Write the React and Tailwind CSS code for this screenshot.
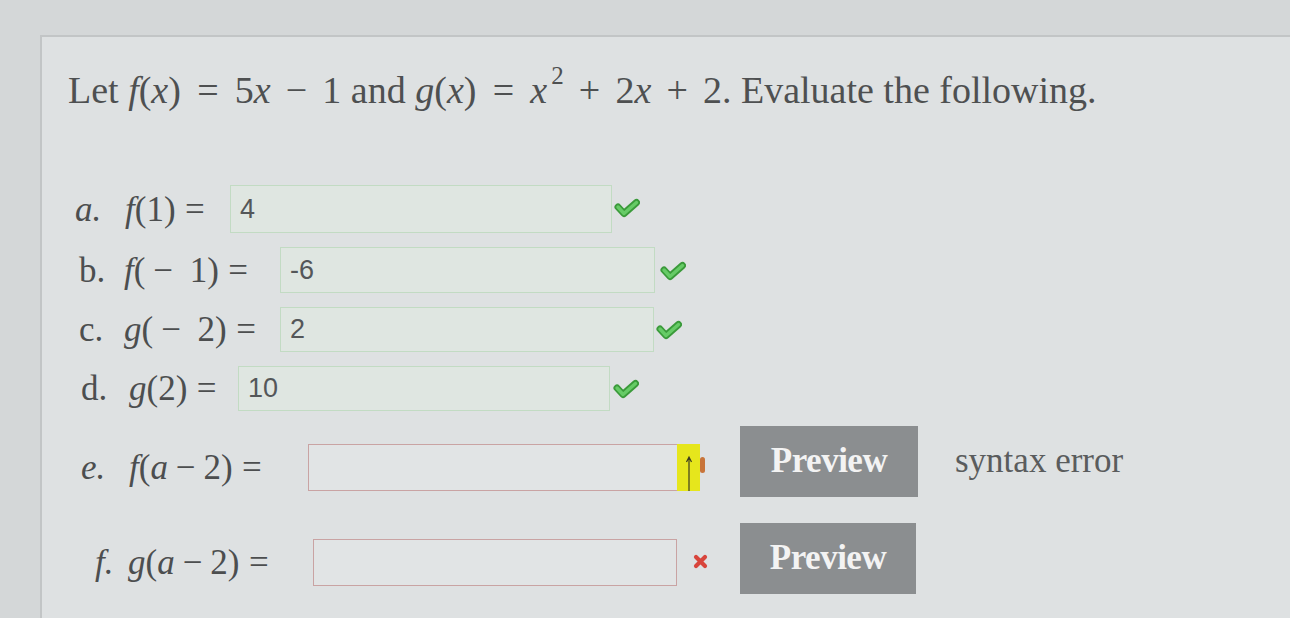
import React from "react";

const serif = { fontFamily: '"Liberation Serif", "Times New Roman", serif' };
const sans = { fontFamily: '"Liberation Sans", Arial, sans-serif' };

const Check = () => (
  <svg width="26" height="21" viewBox="0 0 26 21" className="shrink-0">
    <path d="M4 10 L10 16.5 L22.5 5.5" fill="none" stroke="#3a9a3a" strokeWidth="7" strokeLinecap="round" strokeLinejoin="round" />
    <path d="M4 10 L10 16.5 L22.5 5.5" fill="none" stroke="#66cb66" strokeWidth="3.4" strokeLinecap="round" strokeLinejoin="round" />
  </svg>
);

const Cross = () => (
  <svg width="15" height="15" viewBox="0 0 15 15" className="shrink-0">
    <path d="M3 3 L12 12 M12 3 L3 12" stroke="#d8453c" strokeWidth="4.2" strokeLinecap="round" />
  </svg>
);

// math pieces, spaced roughly the way the TeX renderer spaces them
const V = ({ children }) => <i>{children}</i>;
const Rel = ({ children, wide }) => (
  <span className={`inline-block w-[0.7em] text-center not-italic ${wide ? "mx-[0.36em]" : "mx-[0.2em]"}`}>
    {children}
  </span>
);
const Bin = ({ children, wide }) => (
  <span className={`inline-block w-[0.7em] text-center not-italic ${wide ? "mx-[0.33em]" : "mx-[0.16em]"}`}>
    {children}
  </span>
);

const Label = ({ w, pl, pw, prefix, children, className = "" }) => (
  <div
    className={`flex shrink-0 items-baseline text-[35px] leading-none text-[#4c4e4f] ${w} ${pl} ${className}`}
    style={serif}
  >
    <span className={`shrink-0 ${pw}`}>{prefix}</span>
    <span className="whitespace-nowrap">{children}</span>
  </div>
);

const Answer = ({ w, h, value }) => (
  <div
    className={`flex items-center border border-[#c2dbc3] bg-[#dfe6e1] pl-[9px] text-[27px] text-[#545759] ${w} ${h}`}
    style={sans}
  >
    {value}
  </div>
);

const PreviewBtn = ({ w }) => (
  <button
    className={`flex h-[71px] items-center justify-center bg-[#8b8e90] text-[35px] font-bold tracking-[-0.5px] text-[#f3f3f3] ${w}`}
    style={serif}
  >
    Preview
  </button>
);

export default function App() {
  return (
    <div className="h-[618px] w-[1290px] overflow-hidden bg-[#d4d7d8] pl-[40px] pt-[35px]">
      <div className="h-[600px] border-l-2 border-t-2 border-[#c2c5c6] bg-[#dee1e2] pl-[26px] pt-[31px]">
        <p className="whitespace-nowrap text-[38px] leading-[44px] text-[#4e5051]" style={serif}>
          Let <V>f</V>(<V>x</V>)<Rel wide>=</Rel>5<V>x</V><Bin wide>−</Bin>1 and <V>g</V>(<V>x</V>)
          <Rel wide>=</Rel>
          <V>x</V>
          <sup className="top-[-0.75em] ml-[4px] text-[25px]">2</sup>
          <Bin wide>+</Bin>2<V>x</V>
          <Bin wide>+</Bin>2. Evaluate the following.
        </p>

        <div className="mt-[73px] flex flex-col">
          {/* a */}
          <div className="flex items-center">
            <Label w="w-[162px]" pl="pl-[7px]" pw="w-[50px]" prefix={<i>a.</i>}>
              <V>f</V>(1)<Rel>=</Rel>
            </Label>
            <Answer w="w-[382px]" h="h-[48px]" value="4" />
            <div className="ml-[2px] mt-[-4px]"><Check /></div>
          </div>

          {/* b */}
          <div className="mt-[14px] flex items-center">
            <Label w="w-[212px]" pl="pl-[11px]" pw="w-[45px]" prefix="b.">
              <V>f</V>(<Bin>−</Bin> 1)<Rel>=</Rel>
            </Label>
            <Answer w="w-[375px]" h="h-[46px]" value="-6" />
            <div className="ml-[5px]"><Check /></div>
          </div>

          {/* c */}
          <div className="mt-[14px] flex items-center">
            <Label w="w-[212px]" pl="pl-[11px]" pw="w-[45px]" prefix="c.">
              <V>g</V>(<Bin>−</Bin> 2)<Rel>=</Rel>
            </Label>
            <Answer w="w-[374px]" h="h-[45px]" value="2" />
            <div className="ml-[2px]"><Check /></div>
          </div>

          {/* d */}
          <div className="mt-[14px] flex items-center">
            <Label w="w-[170px]" pl="pl-[13px]" pw="w-[48px]" prefix="d.">
              <V>g</V>(2)<Rel>=</Rel>
            </Label>
            <Answer w="w-[372px]" h="h-[45px]" value="10" />
            <div className="ml-[3px]"><Check /></div>
          </div>

          {/* e */}
          <div className="mt-[15px] flex items-center">
            <Label w="w-[240px]" pl="pl-[13px]" pw="w-[48px]" prefix={<i>e.</i>} className="mt-[11px]">
              <V>f</V>(<V>a</V><Bin>−</Bin>2)<Rel>=</Rel>
            </Label>
            <div className="relative mt-[12px] h-[47px] w-[380px] border border-[#c9a3a3] bg-[#e1e4e5]">
              <div className="absolute right-[-13px] top-[-1px] flex h-[47px] w-[23px] items-end justify-center bg-[#e6e61c]">
                <svg width="8" height="38" viewBox="0 0 8 38">
                  <path d="M4 38 L4 5 M1.5 9 L4 4 L6.5 9" fill="none" stroke="#3a3a20" strokeWidth="1.2" />
                </svg>
              </div>
              <div className="absolute right-[-18px] top-[12px] h-[16px] w-[5px] rounded-sm bg-[#c8743a]" />
            </div>
            <div className="ml-[52px]"><PreviewBtn w="w-[178px]" /></div>
            <div className="ml-[37px] text-[35px] text-[#5a5c5d]" style={serif}>
              syntax error
            </div>
          </div>

          {/* f */}
          <div className="mt-[26px] flex items-center">
            <Label w="w-[245px]" pl="pl-[27px]" pw="w-[33px]" prefix={<i>f.</i>} className="mt-[8px]">
              <V>g</V>(<V>a</V><Bin>−</Bin>2)<Rel>=</Rel>
            </Label>
            <div className="mt-[8px] h-[47px] w-[364px] border border-[#c9a3a3] bg-[#e1e4e5]" />
            <div className="ml-[16px] mt-[6px]"><Cross /></div>
            <div className="ml-[32px]"><PreviewBtn w="w-[176px]" /></div>
          </div>
        </div>
      </div>
    </div>
  );
}
